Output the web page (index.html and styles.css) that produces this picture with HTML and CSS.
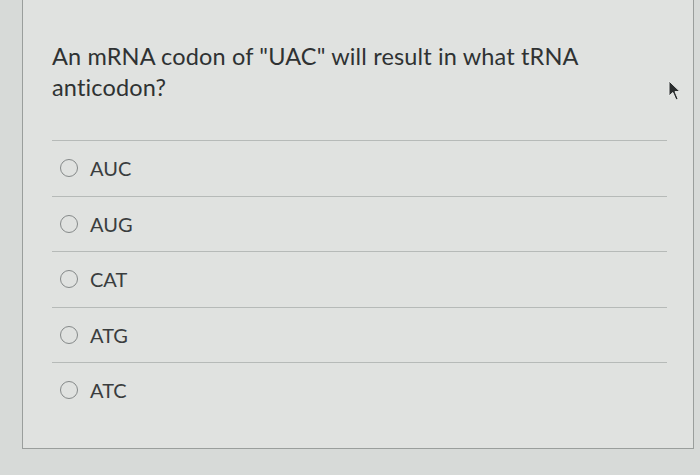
FILE: index.html
```html
<!DOCTYPE html>
<html>
<head>
<meta charset="utf-8">
<link rel="stylesheet" href="styles.css">
</head>
<body>
<div class="card">
  <p class="question">An mRNA codon of "UAC" will result in what tRNA anticodon?</p>
  <ul class="options">
    <li class="option"><span class="radio"></span><span class="label">AUC</span></li>
    <li class="option"><span class="radio"></span><span class="label">AUG</span></li>
    <li class="option"><span class="radio"></span><span class="label">CAT</span></li>
    <li class="option"><span class="radio"></span><span class="label">ATG</span></li>
    <li class="option"><span class="radio"></span><span class="label">ATC</span></li>
  </ul>
  <svg class="cursor" width="14" height="22" viewBox="0 0 14 22"><path d="M1 1 L1 16 L4.8 12.5 L8 20 L10.2 19 L7 11.6 L12 11.6 Z" fill="#2a2d2e" stroke="#e8eae8" stroke-width="1"/></svg>
</div>
</body>
</html>
```
FILE: styles.css
```css
html, body {
  margin: 0;
  padding: 0;
  background: #d7dad8;
  width: 700px;
  height: 475px;
  overflow: hidden;
  font-family: Lato, "Liberation Sans", sans-serif;
}
.card {
  position: relative;
  margin: -2px 0 0 22px;
  width: 672px;
  height: 451px;
  box-sizing: border-box;
  border: 1px solid #9a9e9c;
  background: #e0e2e0;
  padding: 42px 26px 0 29px;
}
.question {
  margin: 0;
  width: 600px;
  font-size: 23.5px;
  letter-spacing: 0.15px;
  line-height: 31px;
  color: #2f3233;
}
.options {
  list-style: none;
  margin: 37px 0 0 0;
  padding: 0;
}
.option {
  display: flex;
  align-items: center;
  height: 55.5px;
  box-sizing: border-box;
  border-top: 1px solid #b6bab8;
  padding-left: 8px;
}
.radio {
  width: 18px;
  height: 18px;
  border: 1.5px solid #858989;
  border-radius: 50%;
  box-sizing: border-box;
  margin-right: 12px;
}
.label {
  font-size: 20px;
  color: #3a3d3e;
}
.cursor {
  position: absolute;
  left: 645px;
  top: 81px;
}
```
